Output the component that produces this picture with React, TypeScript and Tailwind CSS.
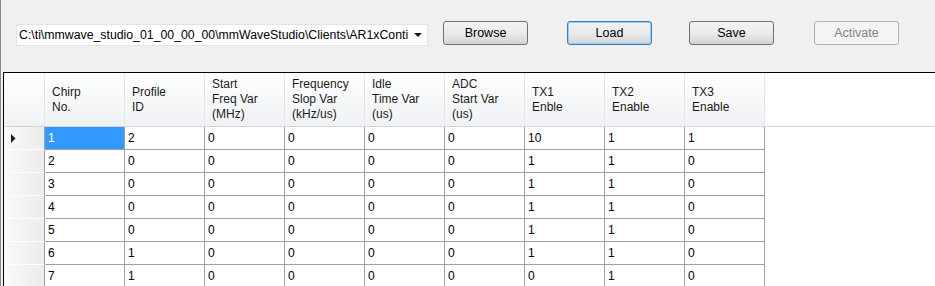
import { ReactNode } from 'react';

const headers: string[][] = [
  ['Chirp', 'No.'],
  ['Profile', 'ID'],
  ['Start', 'Freq Var', '(MHz)'],
  ['Frequency', 'Slop Var', '(kHz/us)'],
  ['Idle', 'Time Var', '(us)'],
  ['ADC', 'Start Var', '(us)'],
  ['TX1', 'Enble'],
  ['TX2', 'Enable'],
  ['TX3', 'Enable'],
];

const rows: string[][] = [
  ['1', '2', '0', '0', '0', '0', '10', '1', '1'],
  ['2', '0', '0', '0', '0', '0', '1', '1', '0'],
  ['3', '0', '0', '0', '0', '0', '1', '1', '0'],
  ['4', '0', '0', '0', '0', '0', '1', '1', '0'],
  ['5', '0', '0', '0', '0', '0', '1', '1', '0'],
  ['6', '1', '0', '0', '0', '0', '1', '1', '0'],
  ['7', '1', '0', '0', '0', '0', '0', '1', '0'],
];

function WinButton({ children, variant = 'normal' }: { children: ReactNode; variant?: 'normal' | 'default' | 'disabled' }) {
  const styles = {
    normal: 'border-[#707070] bg-gradient-to-b from-[#f3f3f3] via-[#ebebeb] to-[#d3d3d3] text-black',
    default: 'border-[#3c7fb1] bg-gradient-to-b from-[#f3f3f3] via-[#e9eaeb] to-[#d3d5d7] text-black shadow-[inset_0_0_0_1px_#8fd2f5]',
    disabled: 'border-[#adb2b5] bg-[#f4f4f4] text-[#838383]',
  };
  return (
    <div className={`w-[85px] h-[24px] mt-[21px] rounded-[3px] border flex items-center justify-center text-[12.5px] ${styles[variant]}`}>
      {children}
    </div>
  );
}

export default function App() {
  return (
    <div
      className="w-[935px] h-[286px] overflow-hidden bg-[#f0f0f0] border-l border-[#8a8a8a] flex flex-col"
      style={{ fontFamily: '"Liberation Sans", Arial, sans-serif' }}
    >
      {/* toolbar */}
      <div className="h-[72px] flex items-start pl-[15px] shrink-0">
        <div className="w-[412px] h-[22px] mt-[24px] bg-white border border-[#e3e3e3] flex items-center pl-[2px] pr-[3px] text-[12.3px] text-black">
          <span className="flex-1 whitespace-nowrap">C:\ti\mmwave_studio_01_00_00_00\mmWaveStudio\Clients\AR1xConti</span>
          <svg width="9" height="5" viewBox="0 0 9 5" className="ml-[2px] mr-[1px] shrink-0">
            <path d="M0 0 H8 L4 4 Z" fill="#1a1a1a" />
          </svg>
        </div>
        <div className="ml-[15px]">
          <WinButton>Browse</WinButton>
        </div>
        <div className="ml-[39px]">
          <WinButton variant="default">Load</WinButton>
        </div>
        <div className="ml-[37px]">
          <WinButton>Save</WinButton>
        </div>
        <div className="ml-[40px]">
          <WinButton variant="disabled">Activate</WinButton>
        </div>
      </div>

      {/* grid */}
      <div className="flex-1 ml-[2px] border-t border-l border-black bg-white text-[12px] text-black">
        {/* header row */}
        <div className="flex h-[54px] border-b border-[#d5d5d5]">
          <div className="w-[41px] shrink-0 bg-gradient-to-b from-white to-[#f1f2f4] border-r border-[#e3e5e8]" />
          {headers.map((lines, i) => (
            <div
              key={i}
              className="w-[80px] shrink-0 bg-gradient-to-b from-white via-[#f7f8fa] to-[#eff1f4] border-r border-[#e3e5e8] flex flex-col justify-center pl-[7px] leading-[15px] text-[#1b1b1b]"
            >
              {lines.map((l) => (
                <span key={l} className="whitespace-nowrap">{l}</span>
              ))}
            </div>
          ))}
        </div>
        {/* body */}
        {rows.map((r, ri) => (
          <div key={ri} className="flex h-[23px]">
            <div className="w-[41px] shrink-0 bg-gradient-to-r from-[#f9f9f9] to-[#ececec] border-b border-white border-r border-r-[#a0a0a0] flex items-center pl-[7px]">
              {ri === 0 && (
                <svg width="5" height="9" viewBox="0 0 5 9">
                  <path d="M0 0 L4.5 4.5 L0 9 Z" fill="#1a1a1a" />
                </svg>
              )}
            </div>
            {r.map((v, ci) => (
              <div
                key={ci}
                className={`w-[80px] shrink-0 border-r border-b border-[#a0a0a0] flex items-center pl-[3px] ${
                  ri === 0 && ci === 0 ? 'bg-[#3399ff] text-white' : ''
                }`}
              >
                {v}
              </div>
            ))}
          </div>
        ))}
      </div>
    </div>
  );
}
